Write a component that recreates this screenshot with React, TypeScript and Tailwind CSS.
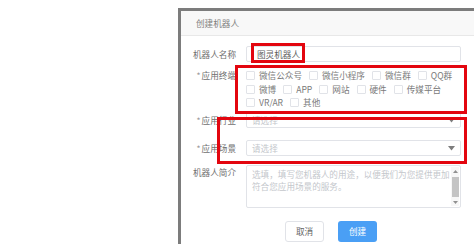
import React from 'react';

const terminals: string[][] = [
  ['微信公众号', '微信小程序', '微信群', 'QQ群'],
  ['微博', 'APP', '网站', '硬件', '传媒平台'],
  ['VR/AR', '其他'],
];

function Caret() {
  return (
    <svg width="7" height="5" viewBox="0 0 7 5" className="shrink-0">
      <path d="M0 0 L7 0 L3.5 4.5 Z" fill="#7d7d7d" />
    </svg>
  );
}

function Label({ text, required }: { text: string; required?: boolean }) {
  return (
    <div className="w-[55px] shrink-0 text-right text-[8.6px] leading-none text-[#707070] whitespace-nowrap">
      {required && <span className="text-[#999] mr-[1px] align-top">*</span>}
      {text}
    </div>
  );
}

function SelectBox() {
  return (
    <div className="w-[215px] h-[16px] flex items-center justify-between border border-[#e1e3e8] rounded-[2px] pl-[5px] pr-[5px] text-[8.6px] text-[#c4c7cc] bg-white">
      <span>请选择</span>
      <Caret />
    </div>
  );
}

export default function App() {
  return (
    <div className="relative w-[474px] h-[244px] overflow-hidden bg-white font-['Noto_Sans_CJK_SC',sans-serif]">
      <div className="ml-[178px] mt-[8px] h-[300px] border-l-[3px] border-t-[3px] border-[#7c7c7c] bg-white">
        {/* header */}
        <div className="h-[25px] flex items-center pl-[15px] bg-[#f8f8f8] border-b border-[#e8e8e8] text-[8.6px] text-[#808080]">
          创建机器人
        </div>

        {/* name */}
        <div className="mt-[10px] flex items-center">
          <Label text="机器人名称" />
          <div className="ml-[10px] w-[215px] h-[16px] flex items-center border border-[#e1e3e8] rounded-[2px] pl-[10px] text-[8.6px] text-[#606060]">
            图灵机器人
          </div>
        </div>

        {/* terminals */}
        <div className="mt-[7px] flex items-start">
          <div className="h-[13.5px] flex items-center">
            <Label text="应用终端" required />
          </div>
          <div className="ml-[10px] flex flex-col">
            {terminals.map((row, i) => (
              <div key={i} className="h-[13.5px] flex items-center gap-[7px]">
                {row.map(t => (
                  <label key={t} className="flex items-center gap-[4px] text-[8.6px] text-[#7a7a7a] leading-none">
                    <span className="w-[9px] h-[9px] border border-[#e1e3e8] rounded-[1px] bg-white" />
                    {t}
                  </label>
                ))}
              </div>
            ))}
          </div>
        </div>

        {/* industry */}
        <div className="mt-[2.5px] flex items-center">
          <Label text="应用行业" required />
          <div className="ml-[10px]"><SelectBox /></div>
        </div>

        {/* scene */}
        <div className="mt-[12px] flex items-center">
          <Label text="应用场景" required />
          <div className="ml-[10px]"><SelectBox /></div>
        </div>

        {/* intro */}
        <div className="mt-[9px] flex items-start">
          <div className="pt-[3px]">
            <Label text="机器人简介" />
          </div>
          <div className="ml-[10px] w-[215px] h-[43px] flex border border-[#e1e3e8] rounded-[2px] bg-white">
            <div className="flex-1 pl-[5px] pt-[3px] text-[8.6px] leading-[11.6px] text-[#c4c7cc]">
              选填，填写您机器人的用途，以便我们为您提供更加<br />符合您应用场景的服务。
            </div>
            <div className="w-[8px] mr-[1px] my-[1px] flex flex-col items-center bg-[#f7f7f7]">
              <div className="h-[8px] flex items-center">
                <svg width="5" height="3" viewBox="0 0 5 3"><path d="M0 3 L5 3 L2.5 0 Z" fill="#909090" /></svg>
              </div>
              <div className="mt-[2px] w-[7px] h-[20px] bg-[#c4c4c4]" />
              <div className="flex-1" />
              <div className="h-[8px] flex items-center">
                <svg width="5" height="3" viewBox="0 0 5 3"><path d="M0 0 L5 0 L2.5 3 Z" fill="#909090" /></svg>
              </div>
            </div>
          </div>
        </div>

        {/* buttons */}
        <div className="mt-[13px] ml-[104px] flex gap-[14px]">
          <button className="w-[39px] h-[21px] border border-[#e1e3e8] rounded-[3px] bg-white text-[8.6px] text-[#666]">
            取消
          </button>
          <button className="w-[39px] h-[21px] rounded-[3px] bg-[#4a9ff5] text-[8.6px] text-white">
            创建
          </button>
        </div>
      </div>

      {/* red annotation boxes */}
      <div className="absolute left-[251px] top-[43px] w-[54px] h-[20px] border-[3px] border-[#e3060f]" />
      <div className="absolute left-[235px] top-[65px] w-[232px] h-[49px] border-[3px] border-[#e3060f]" />
      <div className="absolute left-[217px] top-[117px] w-[250px] h-[47px] border-[3px] border-[#e3060f]" />
    </div>
  );
}
